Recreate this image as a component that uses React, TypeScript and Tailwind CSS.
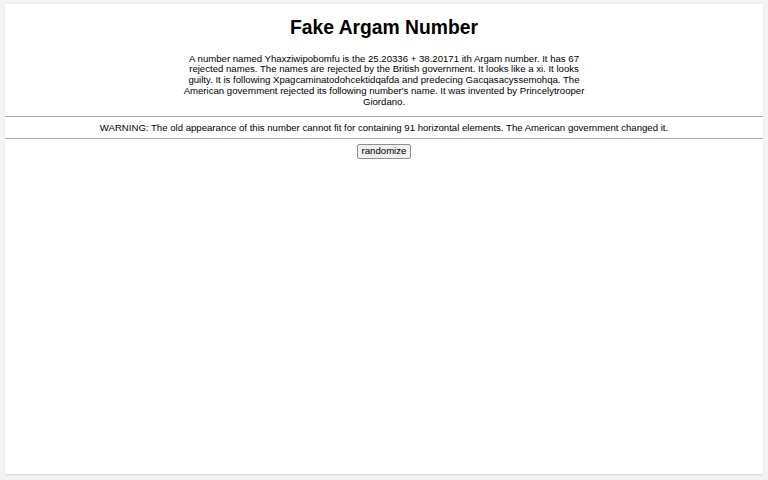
import React, { useState } from 'react';

const App: React.FC = () => {
    const [seed, setSeed] = useState(0);

    return (
        <div className="min-h-screen bg-[#f3f3f3] p-[4px_5px_5px_5px] font-['Liberation_Sans',Arial,sans-serif] text-black" data-seed={seed}>
            <div className="h-[471px] bg-white border-b border-[#d9d9d9] shadow-[0_0_2px_rgba(0,0,0,0.08)]">
                <h1 className="pt-[11px] text-center text-[19.3px] font-bold leading-[26px]">Fake Argam Number</h1>
                <p className="mx-auto mt-[12.5px] w-[402px] text-center text-[9.6px] leading-[10.8px]">
                    A number named Yhaxziwipobomfu is the 25.20336 + 38.20171 ith Argam number. It has 67 rejected names. The names are rejected by the British government. It looks like a xi. It looks guilty. It is following Xpagcaminatodohcektidqafda and predecing Gacqasacyssemohqa. The American government rejected its following number's name. It was invented by Princelytrooper Giordano.
                </p>
                <hr className="mt-[8.5px] border-t border-[#aaaaaa]" />
                <div className="pt-[5px] pb-[5px] text-center text-[9.6px] leading-[11px]">
                    WARNING: The old appearance of this number cannot fit for containing 91 horizontal elements. The American government changed it.
                </div>
                <hr className="border-t border-[#aaaaaa]" />
                <div className="mt-[5px] flex justify-center">
                    <button
                        className="h-[15px] rounded-[2px] border border-[#8f8f8f] bg-[#efefef] px-[4px] text-[9.6px] leading-[12px]"
                        onClick={() => setSeed(s => s + 1)}
                    >
                        randomize
                    </button>
                </div>
            </div>
        </div>
    );
};

export default App;
